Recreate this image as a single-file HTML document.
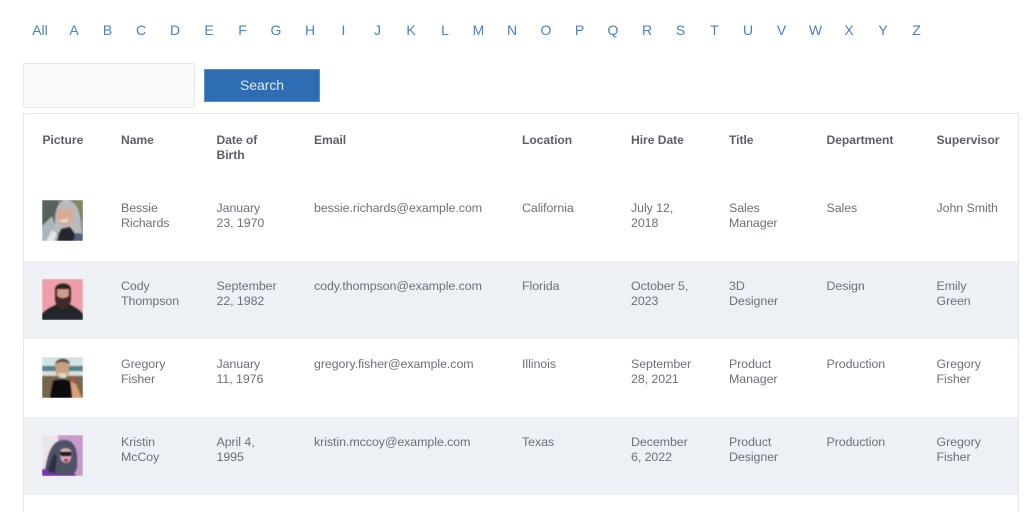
<!DOCTYPE html>
<html lang="en">
<head>
<meta charset="utf-8">
<title>Employee Directory</title>
<style>
html,body{margin:0;padding:0;background:#fff;width:1024px;height:512px;overflow:hidden;}
body{position:relative;font-family:"Liberation Sans",sans-serif;}
#w{position:absolute;left:0;top:0;width:1024px;height:512px;overflow:hidden;filter:blur(.25px);}
.l{position:absolute;top:22px;width:40px;height:16px;line-height:16px;text-align:center;font-size:14px;color:#4a80c0;}
.t{position:absolute;line-height:15px;font-size:12.4px;color:#6d7079;letter-spacing:-.06px;white-space:nowrap;}
.h{position:absolute;top:133px;line-height:15px;font-size:12.1px;font-weight:bold;color:#5c5f68;letter-spacing:-.03px;white-space:nowrap;}
.band{position:absolute;left:24px;width:994px;height:78px;background:#edf0f5;}
.p{position:absolute;left:42px;width:41px;height:41px;overflow:hidden;}
.p svg{display:block;width:41px;height:41px;filter:blur(.7px);}
</style>
</head>
<body>
<div id="w">
<a class="l" style="left:20px">All</a><a class="l" style="left:54px">A</a><a class="l" style="left:87.500px">B</a><a class="l" style="left:121px">C</a><a class="l" style="left:155px">D</a><a class="l" style="left:189px">E</a><a class="l" style="left:222.500px">F</a><a class="l" style="left:256px">G</a><a class="l" style="left:290px">H</a><a class="l" style="left:323.500px">I</a><a class="l" style="left:357.500px">J</a><a class="l" style="left:391px">K</a><a class="l" style="left:425px">L</a><a class="l" style="left:458.500px">M</a><a class="l" style="left:492px">N</a><a class="l" style="left:526px">O</a><a class="l" style="left:559.500px">P</a><a class="l" style="left:593px">Q</a><a class="l" style="left:627px">R</a><a class="l" style="left:660.500px">S</a><a class="l" style="left:694.500px">T</a><a class="l" style="left:728px">U</a><a class="l" style="left:761.500px">V</a><a class="l" style="left:795.500px">W</a><a class="l" style="left:829px">X</a><a class="l" style="left:863px">Y</a><a class="l" style="left:896.500px">Z</a>

<div style="position:absolute;left:23px;top:63px;width:170px;height:43px;background:#f9f9f9;border:1px solid #e8e8e8;border-radius:2px;"></div>
<div style="position:absolute;left:204px;top:69px;width:116px;height:33px;line-height:32px;text-align:center;background:#2e6db4;box-shadow:inset 0 0 0 1px #5b8fcb;color:#dfe9f5;font-size:14px;letter-spacing:-.05px;">Search</div>

<div style="position:absolute;left:23px;top:113px;width:994px;height:399px;border:1px solid #e6e6e6;border-bottom:0;border-radius:2px 2px 0 0;"></div>
<div class="band" style="top:260.500px"></div>
<div class="band" style="top:416.500px"></div>

<div class="h" style="left:42.500px">Picture</div>
<div class="h" style="left:121px">Name</div>
<div class="h" style="left:216.500px">Date of<br>Birth</div>
<div class="h" style="left:314px">Email</div>
<div class="h" style="left:522px">Location</div>
<div class="h" style="left:631px">Hire Date</div>
<div class="h" style="left:729px">Title</div>
<div class="h" style="left:826.500px">Department</div>
<div class="h" style="left:936.500px">Supervisor</div>

<div class="p" style="top:200px"><svg viewBox="0 0 41 41">
<rect width="41" height="41" fill="#6f7a70"/><rect width="16" height="28" fill="#566160"/><rect x="32" width="9" height="13" fill="#7a8a58"/>
<path d="M0 41V26L10 16L14 28L18 41Z" fill="#aeb6bd"/>
<path d="M13 30C12 14 14 1 24 0C36 0 40 14 40 41H28Z" fill="#b9babd"/>
<path d="M15 12C18 6 28 7 31 12C32 20 28 26 22 26C18 26 14 20 15 12Z" fill="#d8ab97"/>
<path d="M17 19C20 21 24 20 26 18L25 22L20 22Z" fill="#f4ebe6"/>
<path d="M15 41L19 29L28 27L33 34L34 41Z" fill="#26272b"/>
<path d="M31 41L34 33L41 34V41Z" fill="#4f6179"/>
<path d="M4 41L10 30L15 33L12 41Z" fill="#dfe3e8"/>
</svg></div>
<div class="p" style="top:278.500px"><svg viewBox="0 0 41 41">
<rect width="41" height="41" fill="#ef9ea8"/>
<path d="M0 41V35C5 29 12 27 15 25H27C31 27 37 30 41 35V41Z" fill="#22252b"/>
<path d="M13 10C14 4 27 4 29 10L29 21C28 27 24 30 21 30C18 30 14 27 13 21Z" fill="#3f2a25"/>
<path d="M15 10H27L27 17C23 20 19 20 15 17Z" fill="#cf9c8a"/>
<path d="M13 9C15 3 27 3 29 9Z" fill="#2b2321"/>
</svg></div>
<div class="p" style="top:357px"><svg viewBox="0 0 41 41">
<rect width="41" height="10" fill="#d3e2e6"/><rect y="9" width="41" height="6" fill="#56848f"/><rect y="14" width="41" height="6" fill="#d9dedc"/><rect y="19" width="41" height="22" fill="#75664c"/>
<path d="M8 41L11 24C15 22 26 22 29 25L30 41Z" fill="#0c0c0e"/>
<path d="M28 24L34 27L40 41H30Z" fill="#d8a072"/>
<path d="M13 6C15 1 26 1 27 6L27 16C25 23 17 23 14 17Z" fill="#c9a07e"/>
<path d="M13 7C15 0 27 0 28 7C23 4 17 4 13 7Z" fill="#5a493e"/>
<path d="M16 16H25L24 21H18Z" fill="#ddd6c9"/>
<rect x="30" y="20" width="3" height="5" fill="#c9483f"/>
</svg></div>
<div class="p" style="top:435px"><svg viewBox="0 0 41 41">
<rect width="41" height="41" fill="#ece5e8"/><rect x="16" width="25" height="41" fill="#c89ac9"/>
<path d="M0 41V34L12 36L30 33L34 41Z" fill="#7a2fb8"/>
<path d="M3 35C6 18 10 5 22 5C33 5 36 16 35 28C36 35 33 38 30 39C22 41 12 40 3 35Z" fill="#4e5266"/>
<path d="M18 16C20 12 28 12 30 17C30 24 27 28 24 28C20 28 17 23 18 16Z" fill="#d8aeb4"/>
<path d="M17 17H30L29 21H19Z" fill="#1e1a24"/>
<path d="M22 24H26L25 27H23Z" fill="#b01d38"/>
<path d="M6 36L12 18L15 22L13 38Z" fill="#2e3040"/>
</svg></div>

<div class="t" style="left:121px;top:200.500px">Bessie<br>Richards</div>
<div class="t" style="left:216.500px;top:200.500px">January<br>23, 1970</div>
<div class="t" style="left:314px;top:200.500px">bessie.richards@example.com</div>
<div class="t" style="left:522px;top:200.500px">California</div>
<div class="t" style="left:631px;top:200.500px">July 12,<br>2018</div>
<div class="t" style="left:729px;top:200.500px">Sales<br>Manager</div>
<div class="t" style="left:826.500px;top:200.500px">Sales</div>
<div class="t" style="left:936.500px;top:200.500px">John Smith</div>

<div class="t" style="left:121px;top:279px">Cody<br>Thompson</div>
<div class="t" style="left:216.500px;top:279px">September<br>22, 1982</div>
<div class="t" style="left:314px;top:279px">cody.thompson@example.com</div>
<div class="t" style="left:522px;top:279px">Florida</div>
<div class="t" style="left:631px;top:279px">October 5,<br>2023</div>
<div class="t" style="left:729px;top:279px">3D<br>Designer</div>
<div class="t" style="left:826.500px;top:279px">Design</div>
<div class="t" style="left:936.500px;top:279px">Emily<br>Green</div>

<div class="t" style="left:121px;top:357px">Gregory<br>Fisher</div>
<div class="t" style="left:216.500px;top:357px">January<br>11, 1976</div>
<div class="t" style="left:314px;top:357px">gregory.fisher@example.com</div>
<div class="t" style="left:522px;top:357px">Illinois</div>
<div class="t" style="left:631px;top:357px">September<br>28, 2021</div>
<div class="t" style="left:729px;top:357px">Product<br>Manager</div>
<div class="t" style="left:826.500px;top:357px">Production</div>
<div class="t" style="left:936.500px;top:357px">Gregory<br>Fisher</div>

<div class="t" style="left:121px;top:435px">Kristin<br>McCoy</div>
<div class="t" style="left:216.500px;top:435px">April 4,<br>1995</div>
<div class="t" style="left:314px;top:435px">kristin.mccoy@example.com</div>
<div class="t" style="left:522px;top:435px">Texas</div>
<div class="t" style="left:631px;top:435px">December<br>6, 2022</div>
<div class="t" style="left:729px;top:435px">Product<br>Designer</div>
<div class="t" style="left:826.500px;top:435px">Production</div>
<div class="t" style="left:936.500px;top:435px">Gregory<br>Fisher</div>
</div>
</body>
</html>
